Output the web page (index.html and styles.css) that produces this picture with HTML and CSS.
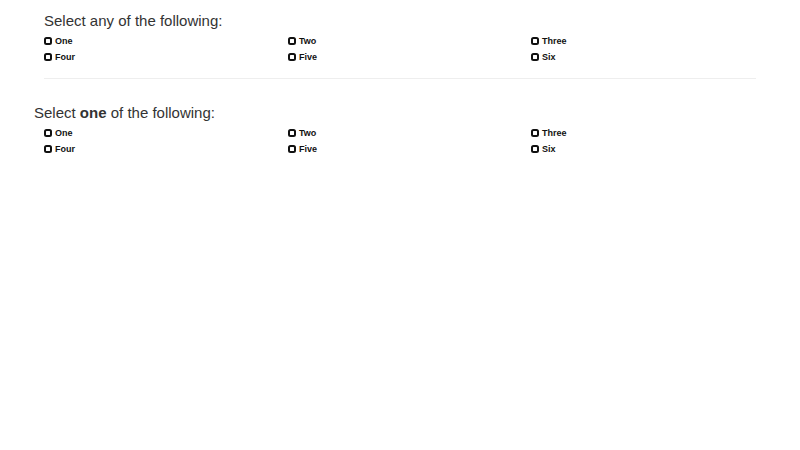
FILE: index.html
```
<html><head>
  <title>Select options</title>
  <link rel="stylesheet" href="styles.css">
</head>
<body>
  <div class="form">
    <div class="group">
      <h3 class="group-title">Select any of the following:</h3>
      <div class="options">
        <label class="option"><span class="box"></span>One</label>
        <label class="option"><span class="box"></span>Two</label>
        <label class="option"><span class="box"></span>Three</label>
        <label class="option"><span class="box"></span>Four</label>
        <label class="option"><span class="box"></span>Five</label>
        <label class="option"><span class="box"></span>Six</label>
      </div>
    </div>

    <hr class="divider">

    <div class="group">
      <h3 class="group-title outdent">Select <b>one</b> of the following:</h3>
      <div class="options">
        <label class="option"><span class="box"></span>One</label>
        <label class="option"><span class="box"></span>Two</label>
        <label class="option"><span class="box"></span>Three</label>
        <label class="option"><span class="box"></span>Four</label>
        <label class="option"><span class="box"></span>Five</label>
        <label class="option"><span class="box"></span>Six</label>
      </div>
    </div>
  </div>
</body></html>
```

FILE: styles.css
```
* {
  margin: 0;
  padding: 0;
  box-sizing: border-box;
  font-family: 'Liberation Sans', Arial, sans-serif;
}

body {
  background: white;
  color: #333;
}

.form {
  padding: 11px 0 0 44px;
}

.group-title {
  font-size: 15px;
  line-height: 20px;
  font-weight: normal;
  color: #333;
  margin-bottom: 2px;
}

.group-title b {
  font-weight: bold;
}

.outdent {
  margin-left: -10px;
}

.options {
  display: grid;
  grid-template-columns: 244px 243px 244px;
}

.option {
  display: flex;
  align-items: center;
  gap: 3px;
  height: 16px;
  font-size: 9px;
  font-weight: bold;
  color: #111;
}

.box {
  width: 8px;
  height: 8px;
  border: 2px solid #111;
  border-radius: 2.5px;
}

.divider {
  width: 712px;
  border: none;
  border-top: 1px solid #eee;
  margin: 13px 0 24px;
}
```
